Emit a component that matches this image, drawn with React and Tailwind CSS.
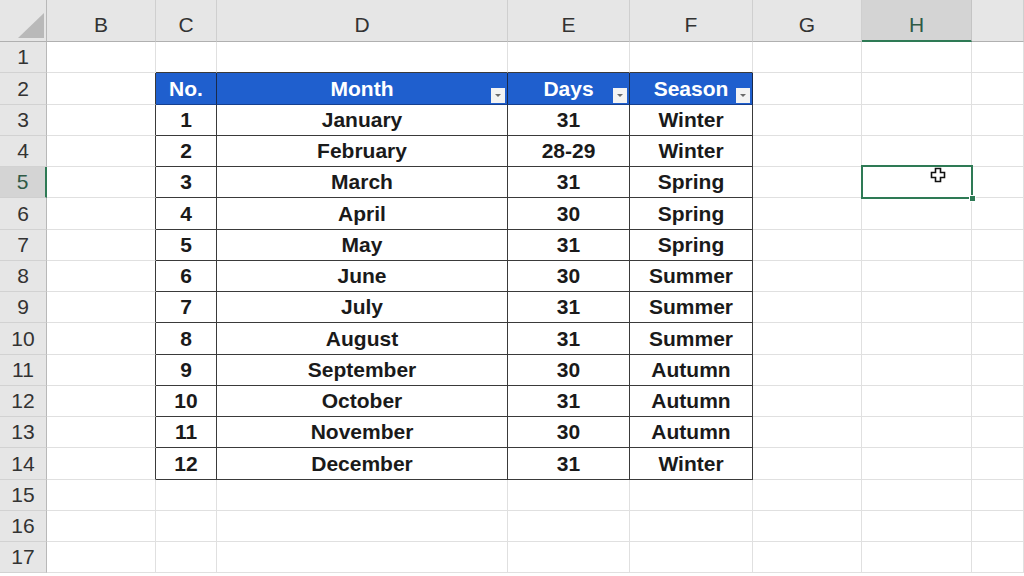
import React from "react";

const data = [
  ["1", "January", "31", "Winter"],
  ["2", "February", "28-29", "Winter"],
  ["3", "March", "31", "Spring"],
  ["4", "April", "30", "Spring"],
  ["5", "May", "31", "Spring"],
  ["6", "June", "30", "Summer"],
  ["7", "July", "31", "Summer"],
  ["8", "August", "31", "Summer"],
  ["9", "September", "30", "Autumn"],
  ["10", "October", "31", "Autumn"],
  ["11", "November", "30", "Autumn"],
  ["12", "December", "31", "Winter"],
];

const letters = ["B", "C", "D", "E", "F", "G", "H", ""];
const font = { fontFamily: '"Liberation Sans", Arial, sans-serif' };

function FilterBtn() {
  return (
    <div className="absolute right-[2px] bottom-[1px] w-[14px] h-[15px] bg-[#f3f3f3] flex items-center justify-center">
      <svg width="8" height="5" viewBox="0 0 8 5">
        <polygon points="1,1 7,1 4,4" fill="#6b6b6b" />
      </svg>
    </div>
  );
}

function Cursor() {
  return (
    <svg
      className="absolute left-[68px] top-[0px] z-30"
      width="16"
      height="16"
      viewBox="0 0 16 16"
    >
      <polygon
        points="5.5,1.5 10.5,1.5 10.5,5.5 14.5,5.5 14.5,10.5 10.5,10.5 10.5,14.5 5.5,14.5 5.5,10.5 1.5,10.5 1.5,5.5 5.5,5.5"
        fill="#ffffff"
        stroke="#111111"
        strokeWidth="1.6"
      />
    </svg>
  );
}

export default function App() {
  const rows = [];
  rows.push(
    <div
      key="corner"
      className="relative bg-[#e6e6e6] border-r border-b border-r-[#b8b8b8] border-b-[#b0b0b0]"
    >
      <svg className="absolute left-[18px] top-[13px]" width="26" height="25" viewBox="0 0 26 25">
        <polygon points="26,0 26,25 0,25" fill="#b9b9b9" />
      </svg>
    </div>
  );
  letters.forEach((l, i) => {
    const sel = l === "H";
    rows.push(
      <div
        key={"h" + i}
        className={
          sel
            ? "flex items-center justify-center bg-[#d4d4d4] border-r border-r-[#c4c4c4] border-b-2 border-b-[#2e7a55] text-[21px] text-[#2f5a46] pt-[9px]"
            : "flex items-center justify-center bg-[#e6e6e6] border-r border-b border-r-[#cfcfcf] border-b-[#b0b0b0] text-[21px] text-[#333333] pt-[9px]"
        }
      >
        {l}
      </div>
    );
  });

  for (let r = 1; r <= 17; r++) {
    const selRow = r === 5;
    rows.push(
      <div
        key={"r" + r}
        className={
          selRow
            ? "flex items-center justify-center bg-[#d4d4d4] border-r-2 border-b border-r-[#2e7a55] border-b-[#cfcfcf] text-[21px] text-[#2f5a46]"
            : "flex items-center justify-center bg-[#e6e6e6] border-r border-b border-r-[#b8b8b8] border-b-[#d2d2d2] text-[21px] text-[#333333]"
        }
      >
        {r}
      </div>
    );
    for (let c = 0; c < 8; c++) {
      const inTable = r >= 2 && r <= 14 && c >= 1 && c <= 4;
      const header = r === 2 && inTable;
      const leftOfTable = c === 0 && r >= 2 && r <= 14;
      const aboveTable = r === 1 && c >= 1 && c <= 4;
      const selCell = r === 5 && c === 6;
      let cls = "relative flex items-center justify-center border-r border-b ";
      if (selCell) cls += "z-20 ";
      if (header) {
        cls += "bg-[#1f5fce] text-white font-bold text-[21px] border-r-[#1a2a4a] border-b-[#16408f]";
      } else if (inTable) {
        cls += "bg-white text-[#1a1a1a] font-bold text-[21px] border-r-[#3a3a3a] border-b-[#3a3a3a]";
      } else {
        cls += "bg-white ";
        cls += leftOfTable ? "border-r-[#3a3a3a] " : "border-r-[#e0e0e0] ";
        cls += aboveTable ? "border-b-[#3a3a3a]" : "border-b-[#e0e0e0]";
      }
      let content = null;
      if (header) {
        content = ["No.", "Month", "Days", "Season"][c - 1];
      } else if (inTable) {
        content = data[r - 3][c - 1];
      }
      rows.push(
        <div key={r + "-" + c} className={cls}>
          {content}
          {header && c >= 2 && <FilterBtn />}
          {selCell && (
            <>
              <div className="absolute top-[-2px] left-[-1px] right-[-2px] bottom-[-2px] border-2 border-[#2e7a55]" />
              <div className="absolute right-[-5px] bottom-[-5px] w-[7px] h-[7px] bg-[#2e7a55] border border-white" />
              <Cursor />
            </>
          )}
        </div>
      );
    }
  }

  return (
    <div
      style={font}
      className="w-[1024px] h-[576px] overflow-hidden bg-white grid grid-cols-[47px_109px_61px_291px_122px_123px_109px_110px_1fr] grid-rows-[42px_repeat(17,31.25px)]"
    >
      {rows}
    </div>
  );
}
